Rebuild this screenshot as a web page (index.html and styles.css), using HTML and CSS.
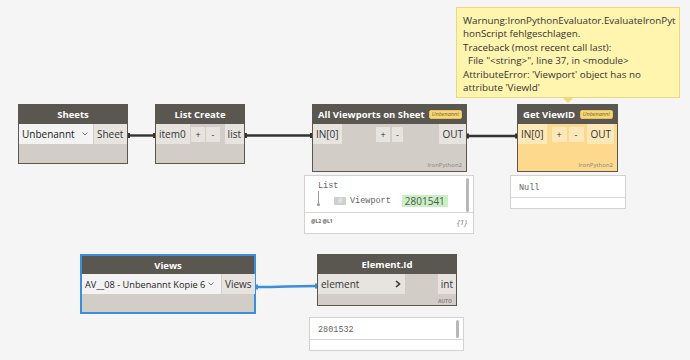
FILE: index.html
```html
<!DOCTYPE html>
<html lang="de">
<head>
  <meta charset="UTF-8">
  <title>Dynamo Graph</title>
  <link rel="stylesheet" href="styles.css">
</head>
<body>
  <div class="canvas">
    <!-- connectors -->
    <svg class="wires" width="690" height="360" viewBox="0 0 690 360">
      <g stroke="#333" stroke-width="2.4" fill="none">
        <path d="M128 135.5 L155 135.5"/>
        <path d="M245 135.5 L312 135.5"/>
        <path d="M467 136 L517 136"/>
      </g>
      <g fill="#333">
        <rect x="127" y="133" width="3" height="5"/>
        <rect x="153" y="133" width="3" height="5"/>
        <rect x="244" y="133" width="3" height="5"/>
        <rect x="310" y="133" width="3" height="5"/>
        <rect x="466" y="133.5" width="3" height="5"/>
        <rect x="515" y="133.5" width="3" height="5"/>
      </g>
      <path d="M256 287 C286 287 287 286 317 286" stroke="#3a8edb" stroke-width="2.4" fill="none"/>
      <rect x="255" y="284.5" width="3" height="5" fill="#3a8edb"/>
      <rect x="315" y="283.5" width="3" height="5" fill="#3a8edb"/>
    </svg>

    <!-- Sheets -->
    <div class="node n-sheets">
      <div class="node-head">Sheets</div>
      <div class="node-row">
        <div class="dropdown">Unbenannt
          <svg class="caret" width="6" height="4" viewBox="0 0 6 4"><path d="M0.5 0.5 L3 3 L5.5 0.5" stroke="#777" fill="none"/></svg>
        </div>
        <div class="port">Sheet</div>
      </div>
      <div class="node-foot"></div>
    </div>

    <!-- List Create -->
    <div class="node n-list">
      <div class="node-head">List Create</div>
      <div class="node-row list-row">
        <div class="port">item0</div>
        <div class="btn">+</div>
        <div class="btn">-</div>
        <div class="port out">list</div>
      </div>
      <div class="node-foot"></div>
    </div>

    <!-- All Viewports on Sheet -->
    <div class="node n-viewports">
      <div class="node-head head-left">All Viewports on Sheet <span class="badge">Unbenannt</span></div>
      <div class="node-row py-row">
        <div class="port">IN[0]</div>
        <div class="ctrls"><div class="btn">+</div><div class="btn">-</div></div>
        <div class="port out">OUT</div>
      </div>
      <div class="node-foot">IronPython2</div>
    </div>

    <!-- Get ViewID -->
    <div class="node n-getid warn">
      <div class="node-head head-left">Get ViewID <span class="badge">Unbenannt</span></div>
      <div class="node-row py-row">
        <div class="port">IN[0]</div>
        <div class="ctrls"><div class="btn">+</div><div class="btn">-</div></div>
        <div class="port out">OUT</div>
      </div>
      <div class="node-foot">IronPython2</div>
    </div>

    <!-- Views -->
    <div class="node n-views selected">
      <div class="node-head">Views</div>
      <div class="node-row">
        <div class="dropdown">AV__08 - Unbenannt Kopie 6
          <svg class="caret" width="6" height="4" viewBox="0 0 6 4"><path d="M0.5 0.5 L3 3 L5.5 0.5" stroke="#777" fill="none"/></svg>
        </div>
        <div class="port">Views</div>
      </div>
      <div class="node-foot"></div>
    </div>

    <!-- Element.Id -->
    <div class="node n-elemid">
      <div class="node-head">Element.Id</div>
      <div class="node-row elem-row">
        <div class="port wide">element
          <svg class="chev" width="6" height="8" viewBox="0 0 6 8"><path d="M1 1 L4.5 4 L1 7" stroke="#333" stroke-width="1.6" fill="none"/></svg>
        </div>
        <div class="port out">int</div>
      </div>
      <div class="node-foot auto">AUTO</div>
    </div>

    <!-- previews -->
    <div class="preview p-viewports">
      <div class="preview-body">
        <div class="mono">List</div>
        <div class="tree">
          <span class="tree-line"></span>
          <span class="idx">0</span>
          <span class="mono">Viewport</span>
          <span class="value">2801541</span>
        </div>
        <span class="scroll"></span>
      </div>
      <div class="preview-foot">
        <span class="levels">@L2 @L1</span>
        <span class="count">{1}</span>
      </div>
    </div>

    <div class="preview p-null">
      <div class="preview-body short"><span class="mono">Null</span></div>
      <div class="preview-foot"></div>
    </div>

    <div class="preview p-elem">
      <div class="preview-body short"><span class="mono">2801532</span><span class="scroll"></span></div>
      <div class="preview-foot"></div>
    </div>

    <!-- warning bubble -->
    <div class="tooltip">
      Warnung:IronPythonEvaluator.EvaluateIronPyt<br>
      honScript fehlgeschlagen.<br>
      Traceback (most recent call last):<br>
      &nbsp;&nbsp;File "&lt;string&gt;", line 37, in &lt;module&gt;<br>
      AttributeError: 'Viewport' object has no<br>
      attribute 'ViewId'
    </div>
  </div>
</body>
</html>
```

FILE: styles.css
```css
* {
  box-sizing: border-box;
}

body {
  margin: 0;
  font-family: "Open Sans", "Liberation Sans", sans-serif;
  color: #333;
}

.canvas {
  position: relative;
  width: 690px;
  height: 360px;
  background: #f5f5f5;
  overflow: hidden;
}

.wires {
  position: absolute;
  left: 0;
  top: 0;
}

/* nodes */
.node {
  position: absolute;
  display: flex;
  flex-direction: column;
  background: #d2cec7;
  border: 1px solid #5a5650;
  white-space: nowrap;
}

.node-head {
  height: 19px;
  flex: none;
  display: flex;
  align-items: center;
  justify-content: center;
  background: #5a5650;
  color: #fff;
  font-size: 9.5px;
  font-weight: 700;
}

.head-left {
  justify-content: space-between;
  padding: 0 4px 0 5px;
}

.node-row {
  height: 20px;
  flex: none;
  display: flex;
  align-items: stretch;
  gap: 1px;
}

.node-foot {
  flex: 1;
  display: flex;
  justify-content: flex-end;
  align-items: flex-end;
  padding: 0 4px 2px;
  font-size: 6px;
  color: #8a857e;
}

.port {
  display: flex;
  align-items: center;
  padding: 0 3px;
  background: #e7e4e0;
  font-size: 10px;
  color: #333;
}

.btn {
  align-self: center;
  width: 14px;
  height: 15px;
  display: flex;
  align-items: center;
  justify-content: center;
  background: #e7e4e0;
  font-size: 9px;
  color: #333;
}

.dropdown {
  flex: 1;
  display: flex;
  align-items: center;
  justify-content: space-between;
  padding: 0 5px 0 3px;
  background: #f3f3f3;
  font-size: 10px;
  color: #222;
}

.caret {
  flex: none;
}

.badge {
  padding: 0 2px;
  background: #f6d77b;
  border: 1px solid #e6c25c;
  border-radius: 2px;
  font-size: 5.5px;
  font-weight: 400;
  font-style: italic;
  line-height: 7px;
  color: #7d6326;
}

.list-row .port:first-child {
  width: 34px;
}

.list-row .out {
  margin-left: auto;
}

.py-row {
  display: grid;
  grid-template-columns: 1fr auto 1fr;
}

.py-row .port:first-child {
  justify-self: start;
}

.py-row .out {
  justify-self: end;
}

.ctrls {
  display: flex;
  gap: 2px;
  align-items: center;
}

.elem-row .wide {
  width: 87px;
  justify-content: space-between;
  padding-right: 4px;
}

.elem-row .out {
  margin-left: auto;
}

.auto {
  font-weight: 700;
  font-size: 5px;
  padding-bottom: 1px;
}

/* node placement on the canvas */
.n-sheets {
  left: 18px;
  top: 104px;
  width: 110px;
  height: 60px;
}

.n-sheets .dropdown {
  flex: none;
  width: 74px;
}

.n-sheets .port {
  flex: 1;
}

.n-list {
  left: 155px;
  top: 104px;
  width: 90px;
  height: 60px;
}

.n-viewports {
  left: 312px;
  top: 104px;
  width: 155px;
  height: 68px;
}

.n-viewports .btn:last-child {
  width: 11px;
}

.n-getid {
  left: 517px;
  top: 104px;
  width: 101px;
  height: 68px;
}

.warn {
  background: #fcd98d;
}

.warn .port,
.warn .btn {
  background: #fde8b9;
}

.n-getid .btn {
  width: 15px;
}

.n-getid .out {
  margin-right: 3px;
}

.n-views {
  left: 80px;
  top: 254px;
  width: 176px;
  height: 60px;
}

.selected {
  border: 2px solid #3a8edb;
}

.selected .node-head {
  height: 18px;
}

.n-views .dropdown {
  flex: none;
  width: 139px;
  font-size: 9.2px;
  padding-right: 7px;
}

.n-views .port {
  flex: 1;
}

.n-elemid {
  left: 317px;
  top: 254px;
  width: 140px;
  height: 52px;
}

/* watch previews */
.preview {
  position: absolute;
  display: flex;
  flex-direction: column;
  background: #fff;
  border: 1px solid #d2d2d2;
  font-size: 9px;
  line-height: 11px;
}

.preview-body {
  position: relative;
  flex: none;
  height: 37px;
  padding: 5px 0 0 13px;
  border-bottom: 1px solid #d8d8d8;
}

.preview-body.short {
  height: 22px;
  padding: 5px 0 0 8px;
}

.preview-foot {
  flex: 1;
  display: flex;
  justify-content: space-between;
  align-items: center;
  padding: 0 6px 3px 6px;
}

.mono {
  font-family: "Liberation Mono", "DejaVu Sans Mono", monospace;
  font-size: 8.5px;
  color: #666;
}

.tree {
  position: relative;
  display: flex;
  align-items: center;
  gap: 4px;
  margin-top: 3px;
  padding-left: 16px;
}

.tree-line {
  position: absolute;
  left: 0;
  top: -4px;
  width: 1px;
  height: 14px;
  background: #999;
}

.tree-line::after {
  content: "";
  position: absolute;
  left: -1px;
  bottom: -1px;
  width: 3px;
  height: 3px;
  border-radius: 50%;
  background: #999;
}

.idx {
  width: 12px;
  height: 8px;
  display: flex;
  align-items: center;
  justify-content: center;
  background: #cfcfcf;
  font-family: "Liberation Mono", monospace;
  font-size: 7px;
  font-style: italic;
  color: #f2f2f2;
}

.value {
  margin-left: 7px;
  padding: 0 3px;
  height: 12px;
  display: flex;
  align-items: center;
  background: #c8f0c2;
  font-size: 10px;
  color: #555;
}

.scroll {
  position: absolute;
  right: 4px;
  top: 2px;
  width: 3px;
  height: 34px;
  border-radius: 2px;
  background: #b8b8b8;
}

.short .scroll {
  height: 18px;
}

.levels {
  font-size: 5px;
  font-weight: 700;
  color: #666;
}

.count {
  font-size: 8px;
  font-style: italic;
  color: #777;
}

.p-viewports {
  left: 304px;
  top: 175px;
  width: 170px;
  height: 59px;
}

.p-null {
  left: 510px;
  top: 175px;
  width: 116px;
  height: 34px;
}

.p-elem {
  left: 309px;
  top: 317px;
  width: 155px;
  height: 34px;
}

/* warning bubble */
.tooltip {
  position: absolute;
  left: 456px;
  top: 7px;
  width: 224px;
  height: 91px;
  padding: 6px 0 0 6px;
  background: #fff5ae;
  border: 1px solid #f1d874;
  font-size: 9.8px;
  line-height: 13.4px;
  color: #333;
  white-space: nowrap;
}

.tooltip::after {
  content: "";
  position: absolute;
  left: 105px;
  bottom: -6px;
  border-left: 6px solid transparent;
  border-right: 6px solid transparent;
  border-top: 6px solid #f1d874;
}
```
